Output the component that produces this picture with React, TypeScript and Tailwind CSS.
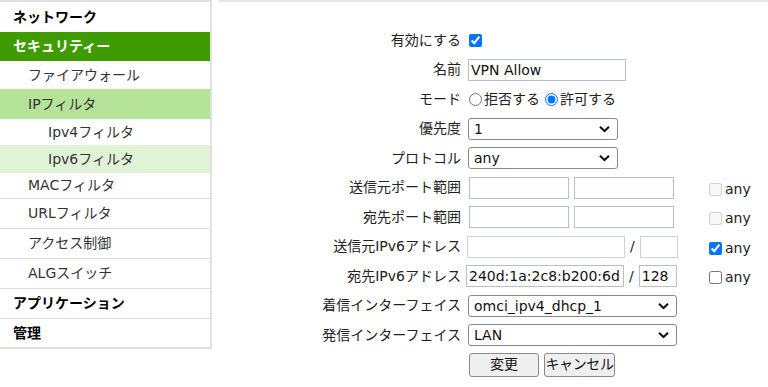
import React from "react";

const Chevron = () => (
  <svg
    className="pointer-events-none absolute right-[8px] top-1/2 -translate-y-1/2"
    width="11"
    height="7"
    viewBox="0 0 11 7"
  >
    <path d="M1 1.2 L5.5 5.5 L10 1.2" fill="none" stroke="#111" strokeWidth="2" />
  </svg>
);

function Select({ value, w }: { value: string; w: string }) {
  return (
    <div className={`relative h-[22px] ${w}`}>
      <select
        defaultValue={value}
        className="h-full w-full appearance-none rounded-[3px] border border-[#8a8a8a] bg-white py-0 pl-[5px] pr-[24px] text-[14px] leading-[20px] text-[#111]"
      >
        <option>{value}</option>
      </select>
      <Chevron />
    </div>
  );
}

function Row({ label, children }: { label: string; children?: React.ReactNode }) {
  return (
    <div className="flex h-[29.5px] items-center">
      <div className="w-[242px] shrink-0 whitespace-nowrap text-right text-[#222]">{label}</div>
      <div className="ml-[7px] flex items-center">{children}</div>
    </div>
  );
}

function AnyBox({ checked, disabled }: { checked?: boolean; disabled?: boolean }) {
  return (
    <label className="flex items-center gap-[3px] pt-[3px]">
      <input
        type="checkbox"
        defaultChecked={checked}
        disabled={disabled}
        className="m-0 h-[13px] w-[13px]"
      />
      <span className="text-[#222]">any</span>
    </label>
  );
}

const inputCls =
  "h-[22px] border border-[#b4c0cf] bg-white px-[2px] py-0 text-[14px] leading-[20px] text-[#111] outline-none";

export default function App() {
  const sub = "flex items-center text-[#333]";
  return (
    <div className="flex h-[387px] w-[768px] overflow-hidden bg-white text-[14px] font-['DejaVu_Sans','Noto_Sans_CJK_JP',sans-serif]">
      <aside className="w-[212px] shrink-0 self-start border-t-2 border-r-2 border-b-2 border-[#e0e0e0]">
        <div className="flex h-[30px] items-center pl-[13px] font-bold text-black">ネットワーク</div>
        <div className="flex h-[29px] items-center bg-[#3f9c00] pl-[13px] font-bold text-white">セキュリティー</div>
        <div className={`${sub} h-[28px] pl-[28px]`}>ファイアウォール</div>
        <div className={`${sub} h-[30px] bg-[#b5e39a] pl-[28px]`}>IPフィルタ</div>
        <div className={`${sub} h-[26px] pl-[48px]`}>Ipv4フィルタ</div>
        <div className={`${sub} h-[28px] bg-[#e1f3d6] pl-[48px]`}>Ipv6フィルタ</div>
        <div className={`${sub} h-[26px] border-b border-[#dcdcdc] pl-[28px]`}>MACフィルタ</div>
        <div className={`${sub} h-[30px] border-b border-[#dcdcdc] pl-[28px]`}>URLフィルタ</div>
        <div className={`${sub} h-[30px] border-b border-[#dcdcdc] pl-[28px]`}>アクセス制御</div>
        <div className={`${sub} h-[30px] border-b border-[#dcdcdc] pl-[28px]`}>ALGスイッチ</div>
        <div className="flex h-[30px] items-center border-b border-[#dcdcdc] pl-[13px] font-bold text-black">アプリケーション</div>
        <div className="flex h-[28px] items-center pl-[13px] font-bold text-black">管理</div>
      </aside>

      <main className="ml-[7px] flex-1 border-t-2 border-[#e6e6e6] pt-[23.5px]">
        <Row label="有効にする">
          <input type="checkbox" defaultChecked className="m-0 ml-[1px] h-[13px] w-[13px]" />
        </Row>
        <Row label="名前">
          <input className={`${inputCls} w-[158px]`} defaultValue="VPN Allow" />
        </Row>
        <Row label="モード">
          <label className="ml-[1px] flex items-center">
            <input type="radio" name="mode" className="m-0 h-[13px] w-[13px]" />
            <span className="ml-[2px] text-[#222]">拒否する</span>
          </label>
          <label className="ml-[5px] flex items-center">
            <input type="radio" name="mode" defaultChecked className="m-0 h-[13px] w-[13px]" />
            <span className="ml-[2px] text-[#222]">許可する</span>
          </label>
        </Row>
        <Row label="優先度">
          <Select value="1" w="w-[150px]" />
        </Row>
        <Row label="プロトコル">
          <Select value="any" w="w-[150px]" />
        </Row>
        <Row label="送信元ポート範囲">
          <div className="flex w-[241px] gap-[5px] pl-[1px]">
            <input className={`${inputCls} w-[100px]`} />
            <input className={`${inputCls} w-[100px]`} />
          </div>
          <AnyBox disabled />
        </Row>
        <Row label="宛先ポート範囲">
          <div className="flex w-[241px] gap-[5px] pl-[1px]">
            <input className={`${inputCls} w-[100px]`} />
            <input className={`${inputCls} w-[100px]`} />
          </div>
          <AnyBox disabled />
        </Row>
        <Row label="送信元IPv6アドレス">
          <div className="-ml-[1px] flex w-[242px] items-center">
            <input disabled className={`${inputCls} w-[158px] border-[#d2d2d2] bg-[#f3f3f3]`} />
            <span className="mx-[5px] text-[#222]">/</span>
            <input disabled className={`${inputCls} w-[38px] border-[#d2d2d2] bg-[#f3f3f3]`} />
          </div>
          <AnyBox checked />
        </Row>
        <Row label="宛先IPv6アドレス">
          <div className="-ml-[2px] flex w-[243px] items-center">
            <input className={`${inputCls} w-[158px] border-[#8fb0d8]`} defaultValue="240d:1a:2c8:b200:6d" />
            <span className="mx-[5px] text-[#222]">/</span>
            <input className={`${inputCls} w-[38px] border-[#8fb0d8]`} defaultValue="128" />
          </div>
          <AnyBox />
        </Row>
        <Row label="着信インターフェイス">
          <Select value="omci_ipv4_dhcp_1" w="w-[209px]" />
        </Row>
        <Row label="発信インターフェイス">
          <Select value="LAN" w="w-[209px]" />
        </Row>
        <Row label="">
          <button className="ml-[1px] h-[24px] w-[70px] rounded-[3px] border border-[#8a8a8a] bg-[#efefef] text-[#111]">変更</button>
          <button className="ml-[5px] h-[24px] w-[71px] whitespace-nowrap rounded-[3px] border border-[#8a8a8a] bg-[#efefef] px-0 tracking-[-0.4px] text-[#111]">キャンセル</button>
        </Row>
      </main>
    </div>
  );
}
